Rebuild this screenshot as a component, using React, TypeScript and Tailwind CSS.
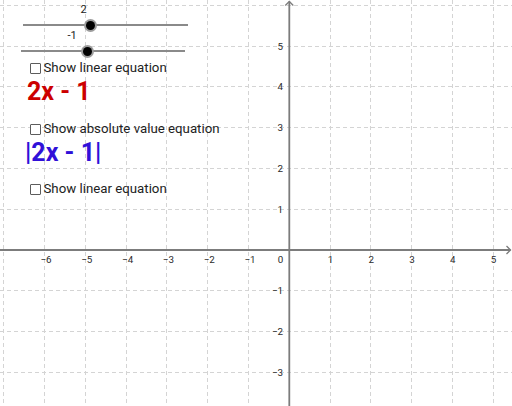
import React from 'react'

const OX = 289.3
const OY = 250
const UNIT = 40.8

const xTicks = [-7, -6, -5, -4, -3, -2, -1, 1, 2, 3, 4, 5]
const yTicks = [6, 5, 4, 3, 2, 1, -1, -2, -3]

const px = (v: number) => Math.floor(v) + 0.5

function Graph() {
  return (
    <svg width={512} height={406} className="block" style={{ fontFamily: 'Roboto, sans-serif' }}>
      {/* grid */}
      <g stroke="#d4d4d4" strokeWidth={1} strokeDasharray="4 3">
        {xTicks.map((k) => (
          <line key={`gx${k}`} x1={px(OX + k * UNIT)} y1={0} x2={px(OX + k * UNIT)} y2={406} />
        ))}
        {yTicks.map((k) => (
          <line key={`gy${k}`} x1={0} y1={px(OY - k * UNIT)} x2={512} y2={px(OY - k * UNIT)} />
        ))}
      </g>

      {/* axes */}
      <g stroke="#7c7c7c" strokeWidth={1.8} fill="none">
        <line x1={0} y1={OY} x2={510.5} y2={OY} />
        <line x1={OX} y1={1.5} x2={OX} y2={406} />
        <polyline points="506.5,246 510.5,250 506.5,254" strokeWidth={1.3} />
        <polyline points={`${OX - 4},5.5 ${OX},1.5 ${OX + 4},5.5`} strokeWidth={1.3} />
      </g>

      {/* labels */}
      <g fill="#2a2a2a" fontSize={9.8}>
        {xTicks
          .filter((k) => k >= -6)
          .map((k) => (
            <text key={`lx${k}`} x={OX + k * UNIT + (k < 0 ? 1.5 : 0.3)} y={262.5} textAnchor="middle">
              {k < 0 ? `\u2212${-k}` : k}
            </text>
          ))}
        <text x={280.5} y={262.5} textAnchor="middle">0</text>
        {yTicks
          .filter((k) => k <= 5)
          .map((k) => (
            <text key={`ly${k}`} x={283} y={OY - k * UNIT + 3.5} textAnchor="end">
              {k < 0 ? `\u2212${-k}` : k}
            </text>
          ))}
      </g>
    </svg>
  )
}

function Slider({ label, labelX, width, knob, className }: {
  label: string
  labelX: number
  width: number
  knob: number
  className: string
}) {
  return (
    <div className={`flex flex-col gap-[3.5px] ${className}`}>
      <span className="h-[11px] text-[11px] leading-none text-[#222]" style={{ paddingLeft: labelX }}>
        {label}
      </span>
      <div className="relative flex h-[13px] items-center" style={{ width }}>
        <div className="h-[2px] w-full bg-[#8a8a8a]" />
        <div
          className="absolute top-0 flex h-[13px] w-[13px] items-center justify-center rounded-full bg-[#9c9c9c]"
          style={{ left: knob - 6.5 }}
        >
          <div className="h-[9px] w-[9px] rounded-full bg-black" />
        </div>
      </div>
    </div>
  )
}

function CheckRow({ label, className }: { label: string; className: string }) {
  return (
    <div className={`flex items-start gap-[3px] ${className}`}>
      <span className="mt-[2px] h-[11px] w-[11px] rounded-[1px] border border-[#5c5c5c] bg-white" />
      <span className="text-[13.25px] leading-none text-[#222]">{label}</span>
    </div>
  )
}

export default function App() {
  return (
    <div className="relative h-[406px] w-[512px] overflow-hidden bg-white font-['Roboto',sans-serif]">
      <Graph />

      <div className="absolute left-[21px] top-[4px] flex flex-col items-start">
        <Slider label="2" labelX={57.5} width={165} knob={67} className="ml-[2px]" />
        <Slider label="-1" labelX={46.5} width={164} knob={66} className="mt-[-1.5px]" />

        <CheckRow label="Show linear equation" className="ml-[8.5px] mt-[3.5px]" />
        <div className="ml-[6px] mt-[4.75px] text-[25px] font-bold leading-none text-[#cc0000]">2x - 1</div>

        <CheckRow label="Show absolute value equation" className="ml-[8.5px] mt-[17.5px]" />
        <div className="ml-[4px] mt-[5.25px] text-[25px] font-bold leading-none text-[#3010d8]">|2x - 1|</div>

        <CheckRow label="Show linear equation" className="ml-[8.5px] mt-[16.5px]" />
      </div>
    </div>
  )
}
